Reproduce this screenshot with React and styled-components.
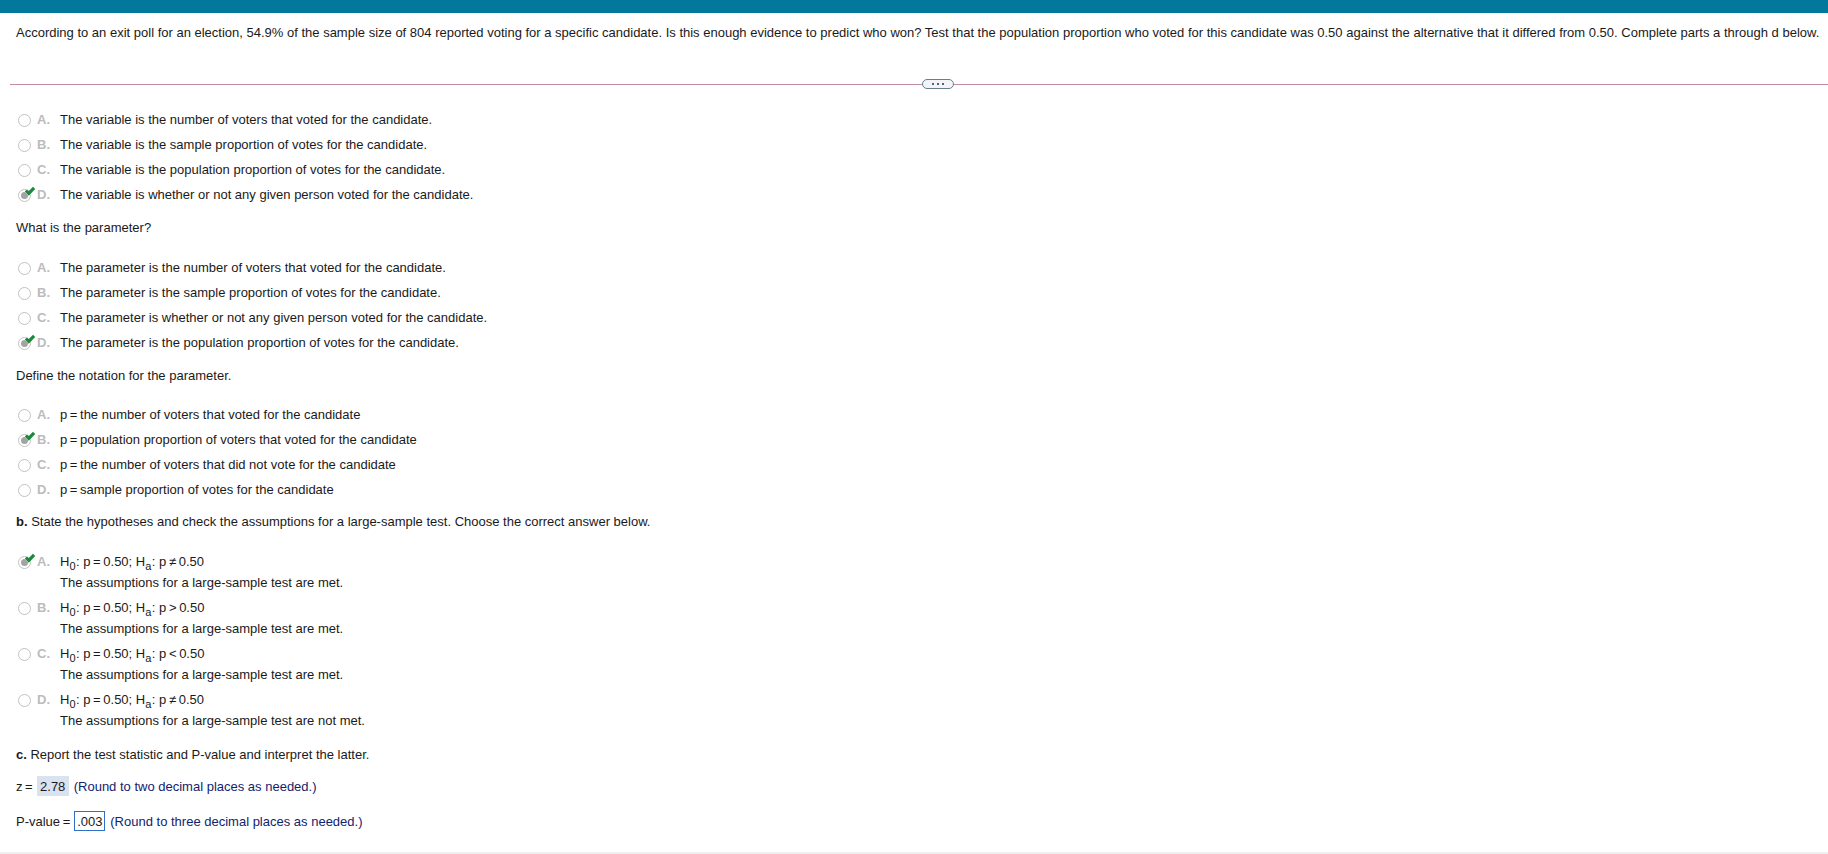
import React from 'react';
import styled, { createGlobalStyle } from 'styled-components';

const GlobalStyle = createGlobalStyle`
  html, body {
    margin: 0;
    padding: 0;
    background: #fff;
  }
  body {
    font-family: "Liberation Sans", Arial, sans-serif;
    font-size: 13px;
    color: #1a1a1a;
  }
`;

const Page = styled.div`
  height: 854px;
  display: flex;
  flex-direction: column;
  overflow: hidden;
`;

const TopBar = styled.div`
  height: 13px;
  flex-shrink: 0;
  background: #03789d;
`;

const Content = styled.div`
  flex: 1;
  padding: 12px 0 0 16px;
`;

const Question = styled.div`
  line-height: 16px;
  white-space: nowrap;
`;

const DividerRow = styled.div`
  display: flex;
  align-items: center;
  height: 10px;
  margin: 38px 0 23px -6px;
`;

const DividerLine = styled.div`
  flex: ${(p) => (p.$width ? `0 0 ${p.$width}px` : 1)};
  height: 1px;
  background: #bd8ca5;
`;

const MoreButton = styled.div`
  box-sizing: border-box;
  width: 32px;
  height: 10px;
  border: 1px solid #6a7d8c;
  border-radius: 5px;
  background: #f2f4f7;
  display: flex;
  align-items: center;
  justify-content: center;
  gap: 3px;
`;

const Dot = styled.span`
  width: 2px;
  height: 2px;
  background: #54626e;
`;

const Options = styled.div`
  display: flex;
  flex-direction: column;
  gap: 9px;
  margin-left: 2px;
`;

const Option = styled.div`
  display: flex;
  align-items: flex-start;
  line-height: 16px;
`;

const RadioWrap = styled.span`
  position: relative;
  width: 13px;
  height: 13px;
  margin-top: 2px;
  flex-shrink: 0;
`;

const RadioCircle = styled.span`
  box-sizing: border-box;
  display: block;
  width: 13px;
  height: 13px;
  border: 1.5px solid #c2c2c2;
  border-radius: 50%;
  background: #fff;
`;

const RadioDot = styled.span`
  position: absolute;
  left: 3px;
  top: 3px;
  width: 7px;
  height: 7px;
  border-radius: 50%;
  background: #a3a3a3;
`;

const Check = styled.svg`
  position: absolute;
  left: 6px;
  top: -3px;
  width: 12px;
  height: 11px;
`;

const Letter = styled.span`
  width: 23px;
  padding-left: 6px;
  flex-shrink: 0;
  color: #bcbcbc;
  font-weight: 700;
`;

const OptionText = styled.div`
  display: flex;
  flex-direction: column;
  gap: 5px;
`;

const Section = styled.div`
  line-height: 16px;
  margin: ${(p) => p.$top}px 0 ${(p) => p.$bottom}px;
`;

const Strong = styled.b`
  font-weight: 700;
`;

const Sub = styled.sub`
  font-size: 11px;
  line-height: 0;
  vertical-align: -4px;
  margin-right: 0.5px;
`;

const AnswerRow = styled.div`
  display: flex;
  align-items: center;
  height: 20px;
  margin-top: ${(p) => p.$top}px;
`;

const FilledAnswer = styled.span`
  display: inline-flex;
  align-items: center;
  justify-content: center;
  height: 20px;
  width: 32px;
  margin: 0 5px 0 4px;
  background: #d9e2ef;
`;

const BoxedAnswer = styled.span`
  box-sizing: border-box;
  display: inline-flex;
  align-items: center;
  justify-content: center;
  height: 20px;
  width: 31px;
  margin: 0 5px 0 4px;
  border: 1px solid #2f6fc4;
`;

const Hint = styled.span`
  color: #12236e;
`;

const BottomStrip = styled.div`
  height: 2px;
  flex-shrink: 0;
  background: #f0f0f0;
`;

const Radio = ({ checked }) => (
  <RadioWrap>
    <RadioCircle />
    {checked && <RadioDot />}
    {checked && (
      <Check viewBox="0 0 12 11">
        <path
          d="M0.8 5.6 L3 3.4 L4.8 5 L9 0.8 L11.2 3 L4.8 9.8 Z"
          fill="#1a8a3a"
          stroke="#fff"
          strokeWidth="0.7"
          paintOrder="stroke"
        />
      </Check>
    )}
  </RadioWrap>
);

const Row = ({ letter, checked, children }) => (
  <Option>
    <Radio checked={checked} />
    <Letter>{letter}.</Letter>
    <OptionText>{children}</OptionText>
  </Option>
);

const Hypothesis = ({ sign }) => (
  <span>
    H<Sub>0</Sub>: p{'\u2009'}={'\u2009'}0.50; H<Sub>a</Sub>: p{'\u2009'}{sign}{'\u2009'}0.50
  </span>
);

const variableOptions = [
  ['A', 'The variable is the number of voters that voted for the candidate.'],
  ['B', 'The variable is the sample proportion of votes for the candidate.'],
  ['C', 'The variable is the population proportion of votes for the candidate.'],
  ['D', 'The variable is whether or not any given person voted for the candidate.', true],
];

const parameterOptions = [
  ['A', 'The parameter is the number of voters that voted for the candidate.'],
  ['B', 'The parameter is the sample proportion of votes for the candidate.'],
  ['C', 'The parameter is whether or not any given person voted for the candidate.'],
  ['D', 'The parameter is the population proportion of votes for the candidate.', true],
];

const notationOptions = [
  ['A', 'p\u2009=\u2009the number of voters that voted for the candidate'],
  ['B', 'p\u2009=\u2009population proportion of voters that voted for the candidate', true],
  ['C', 'p\u2009=\u2009the number of voters that did not vote for the candidate'],
  ['D', 'p\u2009=\u2009sample proportion of votes for the candidate'],
];

const hypothesisOptions = [
  ['A', '≠', 'The assumptions for a large-sample test are met.', true],
  ['B', '>', 'The assumptions for a large-sample test are met.'],
  ['C', '<', 'The assumptions for a large-sample test are met.'],
  ['D', '≠', 'The assumptions for a large-sample test are not met.'],
];

const renderOptions = (items) => (
  <Options>
    {items.map(([letter, text, checked]) => (
      <Row key={letter} letter={letter} checked={checked}>
        <span>{text}</span>
      </Row>
    ))}
  </Options>
);

function App() {
  return (
    <Page>
      <GlobalStyle />
      <TopBar />
      <Content>
        <Question>
          According to an exit poll for an election, 54.9% of the sample size of 804 reported voting for a specific candidate. Is this enough evidence to predict who won? Test that the population proportion who voted for this candidate was 0.50 against the alternative that it differed from 0.50. Complete parts a through d below.
        </Question>
        <DividerRow>
          <DividerLine $width={912} />
          <MoreButton>
            <Dot />
            <Dot />
            <Dot />
          </MoreButton>
          <DividerLine />
        </DividerRow>
        {renderOptions(variableOptions)}
        <Section $top={17} $bottom={24}>What is the parameter?</Section>
        {renderOptions(parameterOptions)}
        <Section $top={17} $bottom={23}>Define the notation for the parameter.</Section>
        {renderOptions(notationOptions)}
        <Section $top={16} $bottom={24}>
          <Strong>b.</Strong> State the hypotheses and check the assumptions for a large-sample test. Choose the correct answer below.
        </Section>
        <Options>
          {hypothesisOptions.map(([letter, sign, note, checked]) => (
            <Row key={letter} letter={letter} checked={checked}>
              <Hypothesis sign={sign} />
              <span>{note}</span>
            </Row>
          ))}
        </Options>
        <Section $top={18} $bottom={0}>
          <Strong>c.</Strong> Report the test statistic and P-value and interpret the latter.
        </Section>
        <AnswerRow $top={13}>
          z{'\u2009'}=<FilledAnswer>2.78</FilledAnswer>
          <Hint>(Round to two decimal places as needed.)</Hint>
        </AnswerRow>
        <AnswerRow $top={15}>
          P-value{'\u2009'}=<BoxedAnswer>.003</BoxedAnswer>
          <Hint>(Round to three decimal places as needed.)</Hint>
        </AnswerRow>
      </Content>
      <BottomStrip />
    </Page>
  );
}

export default App;
